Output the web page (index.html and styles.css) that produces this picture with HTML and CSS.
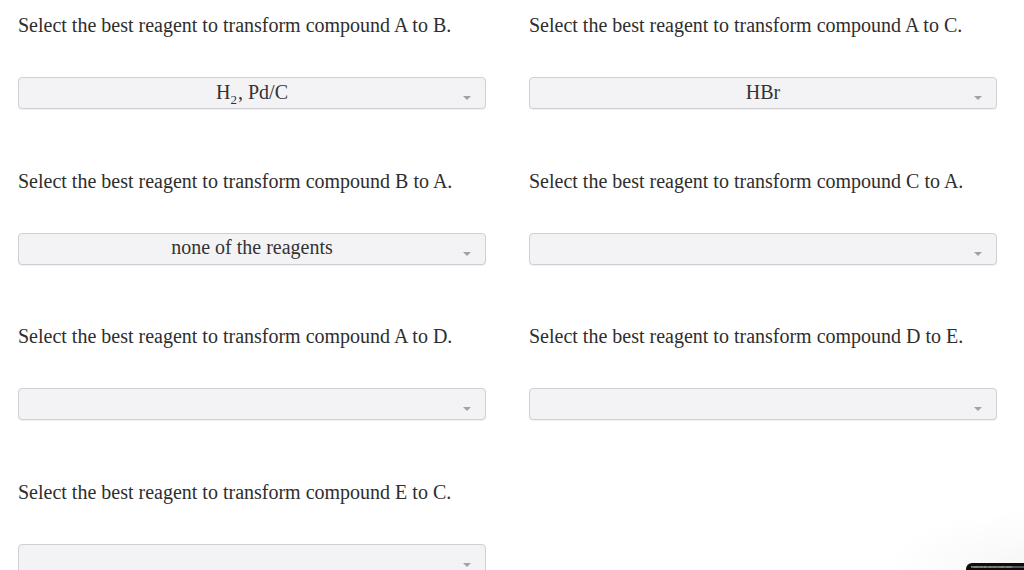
FILE: index.html
```html
<!DOCTYPE html>
<html>
<head>
<meta charset="utf-8">
<link rel="stylesheet" href="styles.css">
</head>
<body>
<div class="page">
  <div class="item">
    <div class="label">Select the best reagent to transform compound A to B.</div>
    <div class="select"><span class="value">H<sub>2</sub>, Pd/C</span><span class="arrow"></span></div>
  </div>
  <div class="item">
    <div class="label">Select the best reagent to transform compound A to C.</div>
    <div class="select"><span class="value">HBr</span><span class="arrow"></span></div>
  </div>
  <div class="item">
    <div class="label">Select the best reagent to transform compound B to A.</div>
    <div class="select"><span class="value">none of the reagents</span><span class="arrow"></span></div>
  </div>
  <div class="item">
    <div class="label">Select the best reagent to transform compound C to A.</div>
    <div class="select"><span class="value"></span><span class="arrow"></span></div>
  </div>
  <div class="item">
    <div class="label">Select the best reagent to transform compound A to D.</div>
    <div class="select"><span class="value"></span><span class="arrow"></span></div>
  </div>
  <div class="item">
    <div class="label">Select the best reagent to transform compound D to E.</div>
    <div class="select"><span class="value"></span><span class="arrow"></span></div>
  </div>
  <div class="item">
    <div class="label">Select the best reagent to transform compound E to C.</div>
    <div class="select"><span class="value"></span><span class="arrow"></span></div>
  </div>
</div>
<div class="corner-fade"></div>
<div class="corner-badge"><span>Powered by secure exam tools</span></div>
</body>
</html>
```
FILE: styles.css
```css
html, body {
  margin: 0;
  padding: 0;
  background: #ffffff;
  overflow: hidden;
}
body {
  font-family: "Liberation Serif", "Times New Roman", serif;
  color: #333333;
  width: 1024px;
  height: 570px;
  position: relative;
}
.page {
  display: grid;
  grid-template-columns: 468px 468px;
  column-gap: 43px;
  row-gap: 60.5px;
  padding: 14px 0 0 18px;
}
.item {
  display: flex;
  flex-direction: column;
}
.label {
  font-size: 20px;
  line-height: 22px;
  height: 22px;
  margin-bottom: 41px;
  color: #2e2e2e;
  white-space: nowrap;
}
.select {
  position: relative;
  height: 32px;
  box-sizing: border-box;
  padding-bottom: 3px;
  background: #f3f3f6;
  border: 1px solid #cfcfd4;
  border-radius: 4px;
  box-shadow: 0 1px 1px rgba(0, 0, 0, 0.06);
  display: flex;
  align-items: center;
  justify-content: center;
}
.value {
  font-size: 20px;
  line-height: 22px;
  color: #333333;
}
.value sub {
  font-size: 13px;
  line-height: 0;
  vertical-align: -5px;
  margin-right: 1px;
}
.arrow {
  position: absolute;
  right: 14px;
  top: 18px;
  width: 0;
  height: 0;
  border-left: 4px solid transparent;
  border-right: 4px solid transparent;
  border-top: 4px solid #a2a2a6;
}
.corner-fade {
  position: absolute;
  right: 0;
  bottom: 0;
  width: 140px;
  height: 60px;
  background: radial-gradient(ellipse at 100% 100%, rgba(0,0,0,0.035), rgba(0,0,0,0) 70%);
}
.corner-badge {
  position: absolute;
  left: 966px;
  top: 563px;
  width: 70px;
  height: 20px;
  background: #0d0d0d;
  border-radius: 6px 0 0 0;
  box-sizing: border-box;
  padding: 3px 0 0 5px;
  overflow: hidden;
}
.corner-badge span {
  display: block;
  font-family: "Liberation Sans", Arial, sans-serif;
  font-size: 3px;
  line-height: 3px;
  color: #bbbbbb;
  white-space: nowrap;
  background: #555;
  height: 2px;
  overflow: hidden;
}
```
